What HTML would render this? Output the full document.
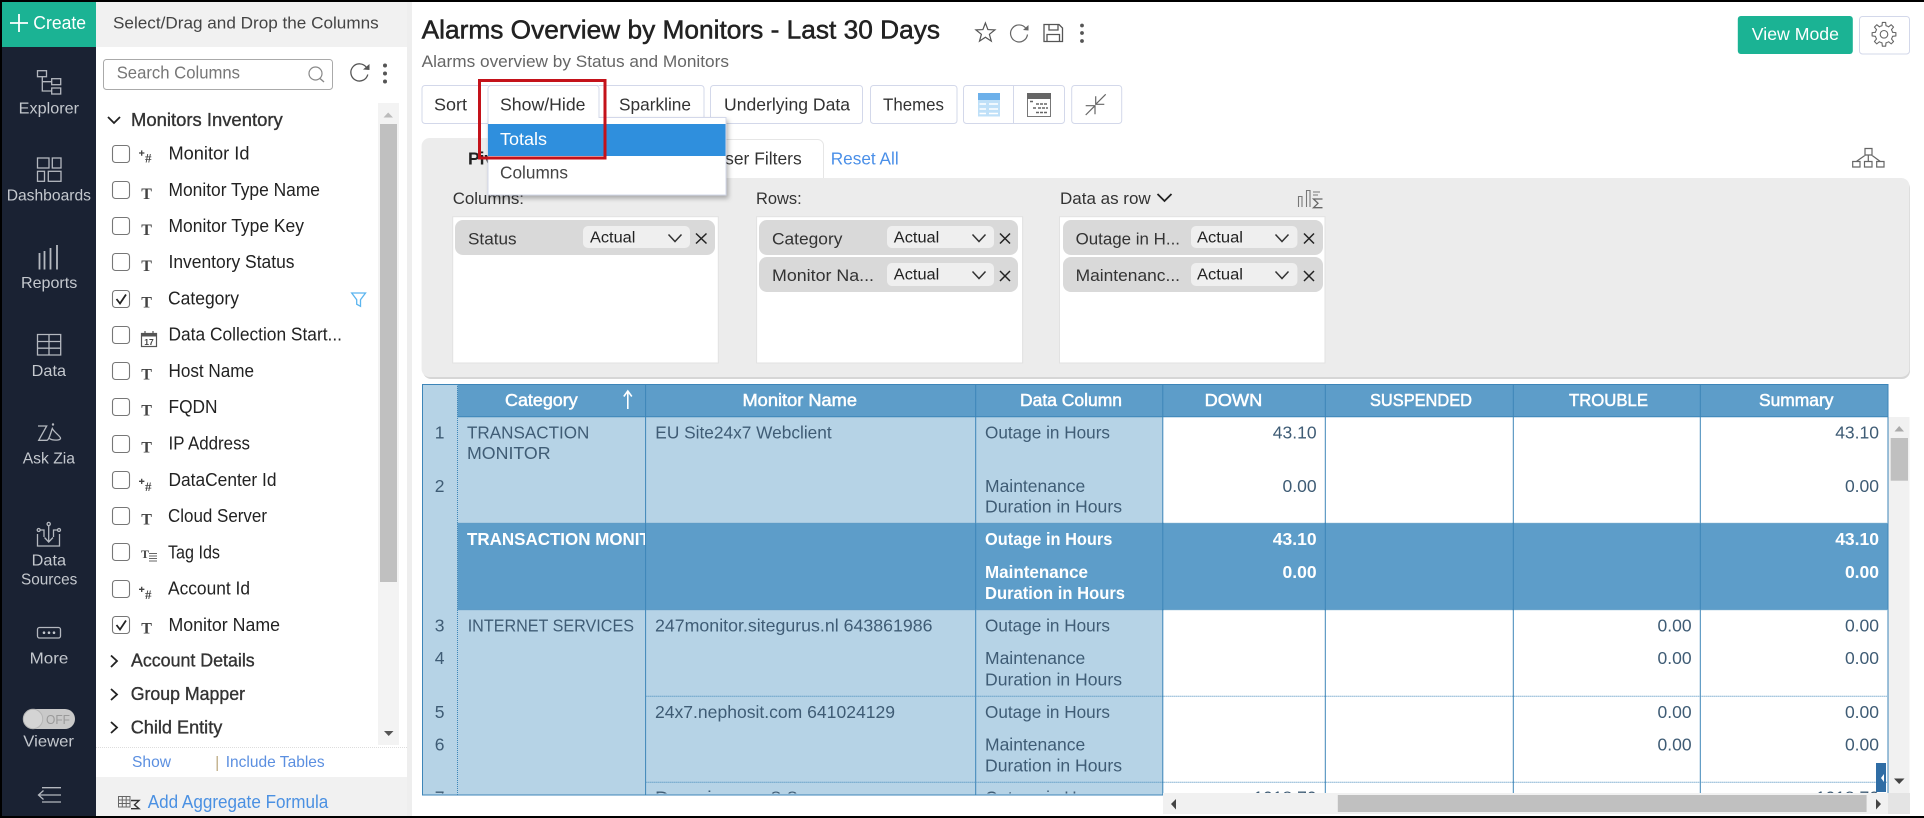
<!DOCTYPE html>
<html><head><meta charset="utf-8"><title>Alarms Overview by Monitors</title>
<style>
html,body{margin:0;padding:0;background:#fff;width:1924px;height:818px;overflow:hidden}
svg{display:block}
text{font-family:"Liberation Sans",sans-serif;white-space:pre;transform:translateY(-.8px)}
.nav{fill:#c4c8ce;font-size:16px}
.li{fill:#222;font-size:18px}
.gh{fill:#333;font-size:18.5px;stroke:#333;stroke-width:.35}
.btn{fill:#333;font-size:17.5px}
.tb{fill:#3f5c75;font-size:17.5px}
.tw{fill:#fff;font-size:17.5px;font-weight:bold}
.hd{fill:#fff;font-size:17.5px;stroke:#fff;stroke-width:.5}
.ac{fill:#222;font-size:15.5px}
.lab{fill:#333;font-size:17px}
.ser{font-family:"Liberation Serif",serif;font-weight:bold;fill:#444}
</style></head><body>
<svg width="1924" height="818" viewBox="0 0 1924 818" xmlns="http://www.w3.org/2000/svg">
<defs>
<filter id="ds" x="-10%" y="-10%" width="125%" height="130%"><feDropShadow dx="2" dy="3" stdDeviation="2.5" flood-color="#000" flood-opacity=".28"/></filter>
<clipPath id="c1"><rect x="458" y="520" width="187" height="50"/></clipPath>
<clipPath id="c2"><rect x="422" y="780" width="1466" height="13.5"/></clipPath>
</defs>
<rect width="1924" height="818" fill="#fff"/>

<!-- left nav -->
<rect x="0" y="0" width="96" height="818" fill="#1a2233"/>
<rect x="2" y="2" width="94" height="45" fill="#1bb394"/>
<path d="M10 23H28M19 14V32" stroke="#fff" stroke-width="1.8" fill="none"/>
<text x="33.3" y="30" fill="#fff" font-size="18" textLength="52.7" lengthAdjust="spacingAndGlyphs">Create</text>

<g fill="none" stroke="#b4b8bf" stroke-width="1.3">
<rect x="37.5" y="70.7" width="9" height="6"/><rect x="51.7" y="78.7" width="9" height="6"/><rect x="51.7" y="88" width="9" height="6"/>
<path d="M42.3 76.7V91H51.7M42.3 81.7H51.7"/>
<rect x="37.5" y="158" width="11.5" height="10"/><rect x="52.3" y="158" width="8.7" height="10"/><rect x="37.5" y="171.3" width="7" height="10"/><rect x="48.3" y="171.3" width="12.7" height="10"/>
<path d="M37.5 334.5H60.7V355H37.5ZM37.5 341.5H60.7M37.5 348.2H60.7M49 334.5V355"/>
<path d="M38 426H46.7L38.7 440.3H47C49 440 51 432 52.3 428.5C54 432 60 436 60.5 438C61 441 52 440.5 49.5 438.5"/>
<path d="M37.5 534V546H59.5V534M48.7 526V542M44.5 537.5L48.7 542L53 537.5M40 530H44V537M58 530H53.5V537"/>
<circle cx="48.7" cy="524" r="1.6"/><circle cx="38.7" cy="530" r="1.5"/><circle cx="59" cy="530" r="1.5"/>
<rect x="37.5" y="627.5" width="23" height="10.5" rx="2"/>
<path d="M42 787.7H61M38.5 795H61M42 802H61M43.5 790.5L38.5 795L43.5 799.5"/>
</g>
<path d="M39.5 269.5V253M44.5 269.5V251M50.5 269.5V248M57 269.5V245" stroke="#b4b8bf" stroke-width="1.8" fill="none"/>
<circle cx="53" cy="424.5" r="1.2" fill="#b4b8bf"/>
<circle cx="44" cy="632.7" r="1.3" fill="#c4c8ce"/><circle cx="49" cy="632.7" r="1.3" fill="#c4c8ce"/><circle cx="54" cy="632.7" r="1.3" fill="#c4c8ce"/>
<rect x="23" y="709" width="52" height="20" rx="10" fill="#c9c9c9"/>
<circle cx="33" cy="719" r="9.7" fill="#d4d4d4" stroke="#b5b5b5"/>
<text x="46" y="724.8" fill="#9a9a9a" font-size="12.5" textLength="24" lengthAdjust="spacingAndGlyphs">OFF</text>

<text class="nav" x="18.7" y="114.3" textLength="60.3" lengthAdjust="spacingAndGlyphs">Explorer</text>
<text class="nav" x="6.7" y="201.3" textLength="84.3" lengthAdjust="spacingAndGlyphs">Dashboards</text>
<text class="nav" x="21" y="289" textLength="56.3" lengthAdjust="spacingAndGlyphs">Reports</text>
<text class="nav" x="31.7" y="376.7" textLength="34.3" lengthAdjust="spacingAndGlyphs">Data</text>
<text class="nav" x="22.7" y="464.3" textLength="52.3" lengthAdjust="spacingAndGlyphs">Ask Zia</text>
<text class="nav" x="31.7" y="566.3" textLength="34.3" lengthAdjust="spacingAndGlyphs">Data</text>
<text class="nav" x="21" y="585.3" textLength="56.3" lengthAdjust="spacingAndGlyphs">Sources</text>
<text class="nav" x="29.7" y="664.3" textLength="38.6" lengthAdjust="spacingAndGlyphs">More</text>
<text class="nav" x="23.3" y="747.3" textLength="50.7" lengthAdjust="spacingAndGlyphs">Viewer</text>

<!-- column panel -->
<rect x="96" y="2" width="311" height="45" fill="#f1f1f1"/>
<text x="113" y="29.3" fill="#444" font-size="17" textLength="265.7" lengthAdjust="spacingAndGlyphs">Select/Drag and Drop the Columns</text>
<rect x="407" y="2" width="5" height="814" fill="#eeeeee"/>
<rect x="103.5" y="59.5" width="229" height="30" rx="3" fill="#fff" stroke="#aaa"/>
<text x="116.7" y="79.3" fill="#777" font-size="17.5" textLength="123.3" lengthAdjust="spacingAndGlyphs">Search Columns</text>
<circle cx="315.5" cy="73.5" r="6.5" fill="none" stroke="#888" stroke-width="1.2"/><path d="M320 78.5L324 82" stroke="#888" stroke-width="1.4"/>
<path d="M366.5 67.5A8.6 8.6 0 1 0 367.8 74.5" fill="none" stroke="#555" stroke-width="1.3"/><path d="M363 69.5L369.5 70V64Z" fill="#555"/>
<circle cx="385" cy="65.5" r="2" fill="#555"/><circle cx="385" cy="73.5" r="2" fill="#555"/><circle cx="385" cy="81.5" r="2" fill="#555"/>

<rect x="378" y="103" width="21" height="642" fill="#f3f3f3"/>
<rect x="380" y="124" width="17" height="458" fill="#c0c0c0"/>
<path d="M383.5 117.5H393L388.2 112.5Z" fill="#bbb"/><path d="M384 731H393.5L388.7 736Z" fill="#555"/>

<path d="M108 117L114 123L120 117" fill="none" stroke="#222" stroke-width="1.8"/>
<text class="gh" x="131" y="126.7" textLength="151.7" lengthAdjust="spacingAndGlyphs">Monitors Inventory</text>

<g fill="#fff" stroke="#777" stroke-width="1.1">
<rect x="112.5" y="145.5" width="17" height="17" rx="3"/><rect x="112.5" y="181.5" width="17" height="17" rx="3"/><rect x="112.5" y="217.5" width="17" height="17" rx="3"/><rect x="112.5" y="253.5" width="17" height="17" rx="3"/><rect x="112.5" y="290.5" width="17" height="17" rx="3"/><rect x="112.5" y="326.5" width="17" height="17" rx="3"/><rect x="112.5" y="362.5" width="17" height="17" rx="3"/><rect x="112.5" y="398.5" width="17" height="17" rx="3"/><rect x="112.5" y="435.5" width="17" height="17" rx="3"/><rect x="112.5" y="471.5" width="17" height="17" rx="3"/><rect x="112.5" y="507.5" width="17" height="17" rx="3"/><rect x="112.5" y="543.5" width="17" height="17" rx="3"/><rect x="112.5" y="580.5" width="17" height="17" rx="3"/><rect x="112.5" y="616.5" width="17" height="17" rx="3"/>
</g>
<path d="M116.5 299L120 303.5L126 294.5M116.5 625L120 629.5L126 620.5" fill="none" stroke="#222" stroke-width="1.8"/>

<text class="li" x="168.5" y="160.5" textLength="81" lengthAdjust="spacingAndGlyphs">Monitor Id</text>
<text class="li" x="168.5" y="196.8" textLength="151.5" lengthAdjust="spacingAndGlyphs">Monitor Type Name</text>
<text class="li" x="168.5" y="232.8" textLength="135.5" lengthAdjust="spacingAndGlyphs">Monitor Type Key</text>
<text class="li" x="168.5" y="268.8" textLength="126" lengthAdjust="spacingAndGlyphs">Inventory Status</text>
<text class="li" x="168" y="305.5" textLength="71" lengthAdjust="spacingAndGlyphs">Category</text>
<text class="li" x="168.5" y="341.5" textLength="173.5" lengthAdjust="spacingAndGlyphs">Data Collection Start...</text>
<text class="li" x="168.5" y="378" textLength="85.5" lengthAdjust="spacingAndGlyphs">Host Name</text>
<text class="li" x="168.5" y="414" textLength="49" lengthAdjust="spacingAndGlyphs">FQDN</text>
<text class="li" x="168.5" y="450.3" textLength="81.5" lengthAdjust="spacingAndGlyphs">IP Address</text>
<text class="li" x="168.5" y="487" textLength="108" lengthAdjust="spacingAndGlyphs">DataCenter Id</text>
<text class="li" x="168" y="523" textLength="99" lengthAdjust="spacingAndGlyphs">Cloud Server</text>
<text class="li" x="168" y="559.3" textLength="52" lengthAdjust="spacingAndGlyphs">Tag Ids</text>
<text class="li" x="168" y="595.5" textLength="82" lengthAdjust="spacingAndGlyphs">Account Id</text>
<text class="li" x="168.5" y="631.7" textLength="111.5" lengthAdjust="spacingAndGlyphs">Monitor Name</text>

<g>
<text class="ser" x="141.2" y="199.8" font-size="16">T</text><text class="ser" x="141.2" y="235.8" font-size="16">T</text><text class="ser" x="141.2" y="271.8" font-size="16">T</text><text class="ser" x="141.2" y="308.3" font-size="16">T</text><text class="ser" x="141.2" y="380.5" font-size="16">T</text><text class="ser" x="141.2" y="416.5" font-size="16">T</text><text class="ser" x="141.2" y="453.2" font-size="16">T</text><text class="ser" x="141.2" y="525.5" font-size="16">T</text><text class="ser" x="141.2" y="634.5" font-size="16">T</text>
<text class="ser" x="141" y="558.8" font-size="12">T</text>
</g>
<path d="M149 553.5H157M149 556H157M149 558.5H157M149 561H157" stroke="#666" stroke-width=".9"/>
<g>
<path d="M139 153H144.4M141.7 150.4V155.7M139 481.3H144.4M141.7 478.7V484M139 589.3H144.4M141.7 586.7V592" stroke="#444" stroke-width="1.3"/>
<text class="ser" x="145" y="163.3" font-size="13">#</text><text class="ser" x="145" y="491.6" font-size="13">#</text><text class="ser" x="145" y="599.6" font-size="13">#</text>
</g>
<rect x="141.5" y="333.5" width="15" height="13" fill="none" stroke="#555" stroke-width="1.2"/><rect x="141.5" y="333.5" width="15" height="3" fill="#555"/><path d="M145 331V334M153 331V334" stroke="#555" stroke-width="1.2"/>
<text x="144.3" y="345.8" fill="#444" font-size="8.5" font-weight="bold">17</text>
<path d="M351.7 293H365.5L360.5 299.7V306.3L356.7 304.2V299.7Z" fill="none" stroke="#5bb5ef" stroke-width="1.3"/>

<path d="M111 655.5L117 661L111 667M111 689L117 694.5L111 700M111 722L117 727.5L111 733" fill="none" stroke="#222" stroke-width="1.8"/>
<text class="gh" x="131" y="667.3" textLength="123.7" lengthAdjust="spacingAndGlyphs">Account Details</text>
<text class="gh" x="130.7" y="701" textLength="114.3" lengthAdjust="spacingAndGlyphs">Group Mapper</text>
<text class="gh" x="130.7" y="734.3" textLength="91.6" lengthAdjust="spacingAndGlyphs">Child Entity</text>

<rect x="96" y="745" width="311" height="32" fill="#fff"/>
<path d="M96 747.5H407" stroke="#ddd" stroke-dasharray="1 1"/>
<text x="132" y="768" fill="#5b8fe0" font-size="16" textLength="39" lengthAdjust="spacingAndGlyphs">Show</text>
<path d="M217.2 756V771" stroke="#b8a478" stroke-width="1.2"/>
<text x="225.7" y="768" fill="#5b8fe0" font-size="16" textLength="99" lengthAdjust="spacingAndGlyphs">Include Tables</text>
<rect x="96" y="777" width="311" height="39" fill="#f1f1f1"/>
<path d="M118.5 796.5H130V807H118.5ZM118.5 800H130M118.5 803.5H130M122.3 796.5V807M126.2 796.5V807" fill="none" stroke="#666"/>
<path d="M131 800.5H139L134.5 804.8L139 808.7H131" fill="none" stroke="#333" stroke-width="1.4"/>
<text x="147.7" y="809" fill="#4a90e2" font-size="18" textLength="180.6" lengthAdjust="spacingAndGlyphs">Add Aggregate Formula</text>

<!-- title -->
<text x="421.6" y="39.3" fill="#222" font-size="26" stroke="#222" stroke-width=".5" textLength="518.4" lengthAdjust="spacingAndGlyphs">Alarms Overview by Monitors - Last 30 Days</text>
<text x="421.6" y="68" fill="#666" font-size="17" textLength="307.4" lengthAdjust="spacingAndGlyphs">Alarms overview by Status and Monitors</text>
<path d="M985.4 23L987.9 29.6L994.9 29.9L989.4 34.3L991.3 41.1L985.4 37.2L979.5 41.1L981.4 34.3L975.9 29.9L982.9 29.6Z" fill="none" stroke="#555" stroke-width="1.2"/>
<path d="M1026 28.5A8.5 8.5 0 1 0 1027.5 34.5" fill="none" stroke="#666" stroke-width="1.2"/><path d="M1023 30L1028.5 30.5V25Z" fill="#666"/>
<path d="M1044 24.5H1059L1062.5 28V41.5H1044ZM1049 24.5V30H1058V24.5M1047 41.5V34.5H1059.5V41.5" fill="none" stroke="#555" stroke-width="1.3"/>
<circle cx="1082" cy="25.5" r="1.9" fill="#555"/><circle cx="1082" cy="33" r="1.9" fill="#555"/><circle cx="1082" cy="41" r="1.9" fill="#555"/>

<!-- top right -->
<rect x="1737.8" y="16" width="115" height="38" rx="3" fill="#1bb394"/>
<text x="1751.8" y="40.7" fill="#fff" font-size="17.5" textLength="87.2" lengthAdjust="spacingAndGlyphs">View Mode</text>
<rect x="1859.5" y="16.5" width="50" height="37.5" rx="3" fill="#fff" stroke="#d3d8ea"/>
<g transform="translate(1884 34.3)" fill="none" stroke="#666" stroke-width="1.1" stroke-linejoin="round">
<path d="M-3.37 -8.13L-1.98 -8.57L-1.67 -11.88H1.67L1.98 -8.57L3.37 -8.13"/>
<path transform="rotate(45)" d="M-3.37 -8.13L-1.98 -8.57L-1.67 -11.88H1.67L1.98 -8.57L3.37 -8.13"/>
<path transform="rotate(90)" d="M-3.37 -8.13L-1.98 -8.57L-1.67 -11.88H1.67L1.98 -8.57L3.37 -8.13"/>
<path transform="rotate(135)" d="M-3.37 -8.13L-1.98 -8.57L-1.67 -11.88H1.67L1.98 -8.57L3.37 -8.13"/>
<path transform="rotate(180)" d="M-3.37 -8.13L-1.98 -8.57L-1.67 -11.88H1.67L1.98 -8.57L3.37 -8.13"/>
<path transform="rotate(225)" d="M-3.37 -8.13L-1.98 -8.57L-1.67 -11.88H1.67L1.98 -8.57L3.37 -8.13"/>
<path transform="rotate(270)" d="M-3.37 -8.13L-1.98 -8.57L-1.67 -11.88H1.67L1.98 -8.57L3.37 -8.13"/>
<path transform="rotate(315)" d="M-3.37 -8.13L-1.98 -8.57L-1.67 -11.88H1.67L1.98 -8.57L3.37 -8.13"/>
<circle r="3.8"/>
</g>

<!-- toolbar -->
<g fill="#fff" stroke="#d3d8ea">
<rect x="422" y="85.5" width="70" height="38" rx="3"/>
<rect x="590" y="85.5" width="114" height="38" rx="3"/>
<rect x="710.5" y="85.5" width="152" height="38" rx="3"/>
<rect x="870.5" y="85.5" width="86.5" height="38" rx="3"/>
<rect x="963.5" y="85.5" width="101" height="38" rx="3"/>
<rect x="1071.7" y="85.5" width="50" height="38" rx="3"/>
<path d="M1013.5 85.5V123.5"/>
</g>
<text class="btn" x="434" y="111.3" textLength="33" lengthAdjust="spacingAndGlyphs">Sort</text>
<text class="btn" x="619" y="111.3" textLength="72" lengthAdjust="spacingAndGlyphs">Sparkline</text>
<text class="btn" x="724" y="111.3" textLength="126" lengthAdjust="spacingAndGlyphs">Underlying Data</text>
<text class="btn" x="883" y="111.3" textLength="61" lengthAdjust="spacingAndGlyphs">Themes</text>
<rect x="978" y="93" width="22" height="23.5" fill="#bfe0f8"/><rect x="978" y="93" width="22" height="7" fill="#6cb0ea"/>
<path d="M979.5 104H986M989 104H998M979.5 109H986M989 109H998M979.5 113.5H986M989 113.5H998" stroke="#fff" stroke-width="1.4"/>
<rect x="1027.5" y="93.5" width="23" height="23" fill="#fff" stroke="#777"/><rect x="1027" y="93" width="24" height="6" fill="#666"/>
<path d="M1030 101.5H1034M1036 104H1048M1033 108H1036M1038 108H1048M1036 112.5H1048" stroke="#666" stroke-width="1.4" stroke-dasharray="3 1"/>
<path d="M1105.7 94.3L1095.7 104.3M1095.7 96.3V104.3H1104.3M1085.7 115L1095 105.7M1085.7 105.7H1095V114.3" fill="none" stroke="#666" stroke-width="1.2"/>

<!-- tabs -->
<path d="M600 178V139.5H817A6 6 0 0 1 823.5 146V178" fill="#fff" stroke="#e6e6e6"/>
<text x="712.5" y="165.3" fill="#333" font-size="17.5" textLength="89.2" lengthAdjust="spacingAndGlyphs">User Filters</text>
<text x="830.7" y="165.3" fill="#4a8fe8" font-size="17.5" textLength="68" lengthAdjust="spacingAndGlyphs">Reset All</text>
<path d="M1852.7 161.5H1860V167H1852.7ZM1864.5 161.5H1872V167H1864.5ZM1876.7 161.5H1884V167H1876.7ZM1865 148.5H1872V155H1865ZM1868.3 155V161.5M1856.3 161.5L1865.5 155M1880.3 161.5L1871.5 155" fill="none" stroke="#666" stroke-width="1.2"/>

<!-- pivot panel -->
<rect x="423" y="180" width="1487" height="199" rx="8" fill="#d6d6d6"/>
<path d="M421.6 369V146A8 8 0 0 1 429.6 138H605V178H1901.4A8 8 0 0 1 1909.4 186V369A8 8 0 0 1 1901.4 377H429.6A8 8 0 0 1 421.6 369Z" fill="#ececec"/>
<text x="468" y="165.3" fill="#222" font-size="17.5" font-weight="bold">Pivot</text>
<text class="lab" x="452.7" y="205" textLength="71.3" lengthAdjust="spacingAndGlyphs">Columns:</text>
<text class="lab" x="756" y="205" textLength="45.7" lengthAdjust="spacingAndGlyphs">Rows:</text>
<text class="lab" x="1060" y="205" textLength="90.7" lengthAdjust="spacingAndGlyphs">Data as row</text>
<path d="M1157.5 194L1164.5 201L1171.5 194" fill="none" stroke="#222" stroke-width="1.8"/>
<path d="M1298.5 207V196.5H1302V207M1306.5 207V190.5H1310V207M1313 192H1320M1313 195H1318" fill="none" stroke="#777" stroke-width="1.1"/>
<path d="M1322.5 199H1313.5L1318 203.3L1313.5 207.7H1322.5" fill="none" stroke="#666" stroke-width="1.3"/>

<g fill="#fff" stroke="#e2e2e2">
<rect x="452.7" y="216.7" width="265.6" height="146.3"/>
<rect x="756.6" y="216.7" width="266" height="146.3"/>
<rect x="1059.5" y="216.7" width="265.5" height="146.3"/>
</g>
<g fill="#d9d9d9">
<rect x="455" y="220" width="260" height="35" rx="8"/>
<rect x="759" y="220" width="259" height="35" rx="8"/><rect x="759" y="257" width="259" height="35" rx="8"/>
<rect x="1063" y="220" width="260" height="35" rx="8"/><rect x="1063" y="257" width="260" height="35" rx="8"/>
</g>
<g fill="#efefef">
<rect x="583" y="226" width="107" height="22" rx="5"/>
<rect x="887" y="226" width="107" height="22" rx="5"/><rect x="887" y="263" width="107" height="23" rx="5"/>
<rect x="1191" y="226" width="106.4" height="22" rx="5"/><rect x="1191" y="263" width="106.4" height="23" rx="5"/>
</g>
<text class="lab" x="468" y="245.3" textLength="48.6" lengthAdjust="spacingAndGlyphs">Status</text>
<text class="lab" x="772" y="245.3" textLength="70.4" lengthAdjust="spacingAndGlyphs">Category</text>
<text class="lab" x="772" y="282" textLength="102" lengthAdjust="spacingAndGlyphs">Monitor Na...</text>
<text class="lab" x="1075.6" y="245.3" textLength="104.4" lengthAdjust="spacingAndGlyphs">Outage in H...</text>
<text class="lab" x="1075.6" y="282" textLength="104.4" lengthAdjust="spacingAndGlyphs">Maintenanc...</text>
<text class="ac" x="590" y="243.3" textLength="45.4" lengthAdjust="spacingAndGlyphs">Actual</text>
<text class="ac" x="893.8" y="243.3" textLength="45.5" lengthAdjust="spacingAndGlyphs">Actual</text>
<text class="ac" x="893.8" y="280.3" textLength="45.5" lengthAdjust="spacingAndGlyphs">Actual</text>
<text class="ac" x="1197" y="243.3" textLength="46" lengthAdjust="spacingAndGlyphs">Actual</text>
<text class="ac" x="1197" y="280.3" textLength="46" lengthAdjust="spacingAndGlyphs">Actual</text>
<g fill="none" stroke="#333" stroke-width="1.5">
<path d="M668.5 234.5L675 241.5L681.5 234.5M972.5 234.5L979 241.5L985.5 234.5M972.5 271.5L979 278.5L985.5 271.5M1275.5 234.5L1282 241.5L1288.5 234.5M1275.5 271.5L1282 278.5L1288.5 271.5"/>
<path d="M696 233.5L706.5 243.5M706.5 233.5L696 243.5M1000 233.5L1010 243.5M1010 233.5L1000 243.5M1000 271L1010 281M1010 271L1000 281M1304 233.5L1314 243.5M1314 233.5L1304 243.5M1304 271L1314 281M1314 271L1304 281" stroke="#222"/>
</g>

<!-- table -->
<rect x="422" y="384" width="741" height="411" fill="#b6d3e6"/>
<rect x="1163" y="417" width="725" height="376" fill="#fff"/>
<rect x="457.5" y="384" width="1430.5" height="33" fill="#5d9dc9"/>
<rect x="457.5" y="523.3" width="1430.5" height="86.4" fill="#5d9dc9"/>
<g stroke="#3d85b8" fill="none">
<path d="M645.6 384V795M975.7 384V795M1162.8 384V795M1325.3 384V793M1513.3 384V793M1700.3 384V793M1888 384V793"/>
<path d="M422.5 384V795M422 384.5H1888M457.5 416.7H1888M422 795H1163"/>
<path d="M457.5 384V795M457.5 523.3H1888M457.5 609.7H1888M645.6 696.3H1888M645.6 782.3H1888" stroke-dasharray="1 1"/>
</g>
<text class="hd" x="505" y="406.7" textLength="72.7" lengthAdjust="spacingAndGlyphs">Category</text>
<path d="M627.8 409V392.5M623.8 396.5L627.8 391L631.8 396.5" fill="none" stroke="#fff" stroke-width="1.6"/>
<text class="hd" x="742.5" y="406.7" textLength="114.5" lengthAdjust="spacingAndGlyphs">Monitor Name</text>
<text class="hd" x="1020" y="406.7" textLength="102" lengthAdjust="spacingAndGlyphs">Data Column</text>
<text class="hd" x="1204.6" y="406.7" textLength="57.7" lengthAdjust="spacingAndGlyphs">DOWN</text>
<text class="hd" x="1370" y="406.7" textLength="102" lengthAdjust="spacingAndGlyphs">SUSPENDED</text>
<text class="hd" x="1569" y="406.7" textLength="79" lengthAdjust="spacingAndGlyphs">TROUBLE</text>
<text class="hd" x="1759" y="406.7" textLength="74.5" lengthAdjust="spacingAndGlyphs">Summary</text>

<g text-anchor="middle">
<text class="tb" x="439.6" y="439.3">1</text><text class="tb" x="439.6" y="492.7">2</text><text class="tb" x="439.6" y="632.3">3</text><text class="tb" x="439.6" y="665">4</text><text class="tb" x="439.6" y="719">5</text><text class="tb" x="439.6" y="751.3">6</text>
</g>
<text class="tb" x="467" y="439.3" textLength="122.4" lengthAdjust="spacingAndGlyphs">TRANSACTION</text>
<text class="tb" x="467" y="460" textLength="83.6" lengthAdjust="spacingAndGlyphs">MONITOR</text>
<text class="tb" x="655.3" y="439.3" textLength="176.4" lengthAdjust="spacingAndGlyphs">EU Site24x7 Webclient</text>
<text class="tb" x="985" y="439.3" textLength="125" lengthAdjust="spacingAndGlyphs">Outage in Hours</text>
<text class="tb" x="985" y="492.7" textLength="100.2" lengthAdjust="spacingAndGlyphs">Maintenance</text>
<text class="tb" x="985" y="513.3" textLength="137" lengthAdjust="spacingAndGlyphs">Duration in Hours</text>

<g clip-path="url(#c1)"><text class="tw" x="467" y="545.7" textLength="208" lengthAdjust="spacingAndGlyphs">TRANSACTION MONITOR</text></g>
<text class="tw" x="985" y="545.7" textLength="127.4" lengthAdjust="spacingAndGlyphs">Outage in Hours</text>
<text class="tw" x="985" y="579" textLength="103" lengthAdjust="spacingAndGlyphs">Maintenance</text>
<text class="tw" x="985" y="600" textLength="140" lengthAdjust="spacingAndGlyphs">Duration in Hours</text>

<text class="tb" x="467.7" y="632.3" textLength="166.3" lengthAdjust="spacingAndGlyphs">INTERNET SERVICES</text>
<text class="tb" x="655" y="632.3" textLength="277.5" lengthAdjust="spacingAndGlyphs">247monitor.sitegurus.nl 643861986</text>
<text class="tb" x="985" y="632.3" textLength="125" lengthAdjust="spacingAndGlyphs">Outage in Hours</text>
<text class="tb" x="985" y="665" textLength="100.2" lengthAdjust="spacingAndGlyphs">Maintenance</text>
<text class="tb" x="985" y="686.3" textLength="137" lengthAdjust="spacingAndGlyphs">Duration in Hours</text>
<text class="tb" x="655" y="719" textLength="240" lengthAdjust="spacingAndGlyphs">24x7.nephosit.com 641024129</text>
<text class="tb" x="985" y="719" textLength="125" lengthAdjust="spacingAndGlyphs">Outage in Hours</text>
<text class="tb" x="985" y="751.3" textLength="100.2" lengthAdjust="spacingAndGlyphs">Maintenance</text>
<text class="tb" x="985" y="772.3" textLength="137" lengthAdjust="spacingAndGlyphs">Duration in Hours</text>

<g clip-path="url(#c2)">
<text class="tb" x="439.6" y="804.5" text-anchor="middle">7</text>
<text class="tb" x="655" y="804.5" textLength="158" lengthAdjust="spacingAndGlyphs">Domain.com 8.8.x</text>
<text class="tb" x="985" y="804.5" textLength="125" lengthAdjust="spacingAndGlyphs">Outage in Hours</text>
<text class="tb" x="1316.6" y="804.5" text-anchor="end">1018.70</text>
<text class="tb" x="1879" y="804.5" text-anchor="end">1018.70</text>
</g>

<g text-anchor="end">
<text class="tb" x="1316.6" y="439.3">43.10</text><text class="tb" x="1879" y="439.3">43.10</text>
<text class="tb" x="1316.6" y="492.7">0.00</text><text class="tb" x="1879" y="492.7">0.00</text>
<text class="tw" x="1316.6" y="545.7">43.10</text><text class="tw" x="1879" y="545.7">43.10</text>
<text class="tw" x="1316.6" y="579">0.00</text><text class="tw" x="1879" y="579">0.00</text>
<text class="tb" x="1691.6" y="632.3">0.00</text><text class="tb" x="1879" y="632.3">0.00</text>
<text class="tb" x="1691.6" y="665">0.00</text><text class="tb" x="1879" y="665">0.00</text>
<text class="tb" x="1691.6" y="719">0.00</text><text class="tb" x="1879" y="719">0.00</text>
<text class="tb" x="1691.6" y="751.3">0.00</text><text class="tb" x="1879" y="751.3">0.00</text>
</g>

<!-- table scrollbars -->
<rect x="1888.5" y="417" width="21" height="377" fill="#f1f1f1"/>
<rect x="1890.7" y="438" width="17.3" height="42.7" fill="#c0c0c0"/>
<path d="M1894.5 431.5H1904L1899.2 426Z" fill="#aaa"/>
<path d="M1894 778.5H1904.5L1899.2 784Z" fill="#444"/>
<rect x="1163" y="793" width="725" height="21" fill="#f1f1f1"/>
<rect x="1337.8" y="795" width="528.8" height="17" fill="#c0c0c0"/>
<path d="M1176 799L1171 804L1176 809.5Z" fill="#444"/>
<path d="M1876 799L1881 804L1876 809.5Z" fill="#444"/>
<rect x="1888" y="793" width="22" height="21" fill="#e4e4e4"/>
<rect x="1876" y="763" width="10" height="29" fill="#2f6da5"/>
<path d="M1884 774L1881 778L1884 782Z" fill="#fff"/>

<!-- dropdown -->
<rect x="488" y="117.5" width="238" height="77.5" fill="#fff" stroke="#d3d8ea" filter="url(#ds)"/>
<path d="M488 124V85.5H599V124Z" fill="#fff"/>
<path d="M488 124V88.5A3 3 0 0 1 491 85.5H596A3 3 0 0 1 599 88.5V118" fill="#fff" stroke="#d3d8ea"/>
<text class="btn" x="500" y="111.3" textLength="85.5" lengthAdjust="spacingAndGlyphs">Show/Hide</text>
<rect x="488" y="124" width="237.5" height="32" fill="#2f8fdd"/>
<text x="500" y="146" fill="#fff" font-size="17.5" textLength="47" lengthAdjust="spacingAndGlyphs">Totals</text>
<text x="500" y="179.3" fill="#444" font-size="17.5" textLength="68" lengthAdjust="spacingAndGlyphs">Columns</text>
<rect x="479.5" y="80.5" width="125.5" height="77.5" fill="none" stroke="#c4121a" stroke-width="3"/>

<!-- frame -->
<rect x="0" y="0" width="1924" height="2" fill="#000"/>
<rect x="0" y="0" width="2" height="818" fill="#000"/>
<rect x="0" y="816" width="1924" height="2" fill="#000"/>
</svg>
</body></html>
